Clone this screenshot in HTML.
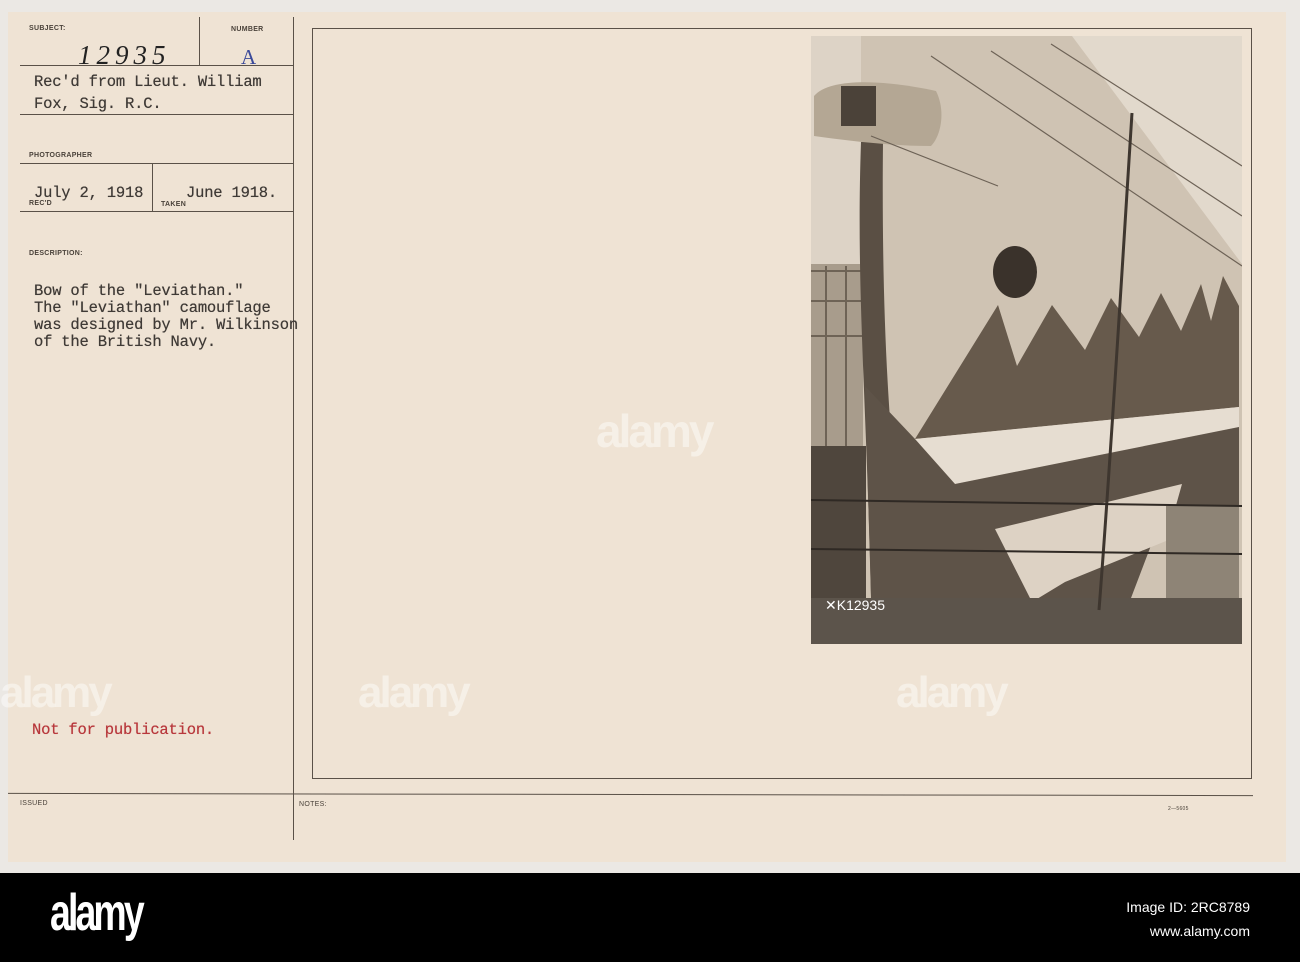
<!DOCTYPE html>
<html><head><style>
body{margin:0;width:1300px;height:962px;background:#ebe8e4;position:relative;overflow:hidden;font-family:"Liberation Mono",monospace;}
.card{position:absolute;left:8px;top:12px;width:1278px;height:850px;background:#efe3d4;}
.l{position:absolute;background:#5a5148;}
.lab{position:absolute;font-family:"Liberation Sans",sans-serif;font-size:7px;font-weight:bold;color:#4a423a;letter-spacing:.3px}
.t{position:absolute;font-size:15.5px;color:#3f3a36;white-space:nowrap;letter-spacing:-.2px;text-shadow:0 0 .4px #3f3a36}
.bar{position:absolute;left:0;top:873px;width:1300px;height:89px;background:#000;}
.wm{position:absolute;color:rgba(255,255,255,.45);font-family:"Liberation Sans",sans-serif;font-weight:bold;}
</style></head><body>
<div class="card"></div>
<div class="l" style="left:20px;top:65px;width:273px;height:1px"></div>
<div class="l" style="left:20px;top:114px;width:273px;height:1px"></div>
<div class="l" style="left:20px;top:163px;width:273px;height:1px"></div>
<div class="l" style="left:20px;top:211px;width:273px;height:1px"></div>
<div class="l" style="left:199px;top:17px;width:1px;height:48px"></div>
<div class="l" style="left:152px;top:163px;width:1px;height:48px"></div>
<div class="l" style="left:293px;top:17px;width:1px;height:823px"></div>
<div class="l" style="left:8px;top:794px;width:1245px;height:1px;transform:rotate(0.1deg)"></div>
<div style="position:absolute;left:312px;top:28px;width:938px;height:749px;border:1px solid #5a5148"></div>
<div class="lab" style="left:29px;top:25px">SUBJECT:</div>
<div class="lab" style="left:231px;top:26px">NUMBER</div>
<div style="position:absolute;left:78px;top:40px;font-family:'Liberation Serif',serif;font-style:italic;font-size:27px;color:#222;letter-spacing:5px">12935</div>
<div style="position:absolute;left:241px;top:45px;font-family:'Liberation Serif',serif;font-size:21px;color:#3b4a9a">A</div>
<div class="t" style="left:34px;top:73px">Rec'd from Lieut. William</div>
<div class="t" style="left:34px;top:95px">Fox, Sig. R.C.</div>
<div class="lab" style="left:29px;top:152px">PHOTOGRAPHER</div>
<div class="t" style="left:34px;top:184px">July 2, 1918</div>
<div class="lab" style="left:29px;top:200px">REC'D</div>
<div class="t" style="left:186px;top:184px">June 1918.</div>
<div class="lab" style="left:161px;top:201px">TAKEN</div>
<div class="lab" style="left:29px;top:250px">DESCRIPTION:</div>
<div class="t" style="left:34px;top:283px;line-height:17px">Bow of the "Leviathan."<br>The "Leviathan" camouflage<br>was designed by Mr. Wilkinson<br>of the British Navy.</div>
<div class="t" style="left:32px;top:721px;color:#b8383c;text-shadow:0 0 .4px #b8383c">Not for publication.</div>
<div class="lab" style="left:20px;top:800px;font-weight:normal">ISSUED</div>
<div class="lab" style="left:299px;top:801px;font-weight:normal">NOTES:</div>
<div class="lab" style="left:1168px;top:806px;font-weight:normal;font-size:5px">2—5605</div>
<svg style="position:absolute;left:811px;top:36px" width="431" height="608" viewBox="0 0 431 608">
<rect width="431" height="608" fill="#cfc3b3"/>
<polygon points="261,0 431,0 431,228" fill="#e2d9cc"/>
<rect x="0" y="0" width="50" height="230" fill="#ddd3c6"/>
<rect x="0" y="228" width="52" height="185" fill="#a89c8c"/>
<path d="M0,235 H52 M0,265 H52 M0,300 H52 M15,230 V410 M35,230 V410" stroke="#6e6356" stroke-width="2"/>
<rect x="0" y="410" width="55" height="155" fill="#4f463d"/>
<path d="M50,106 C45,250 55,350 60,560 L100,560 C80,450 70,300 72,106Z" fill="#5a4f44"/>
<polygon points="104,403 187,269 206,330 241,269 274,314 300,262 328,301 350,257 370,295 390,248 400,285 412,240 428,270 428,371" fill="#675a4c"/>
<polygon points="104,403 428,371 428,391 144,448" fill="#e6ddd1"/>
<polygon points="54,350 104,403 144,448 428,391 428,470 355,470 320,562 60,562" fill="#5e5348"/>
<polygon points="184,493 371,448 355,505 254,546 221,566" fill="#ddd2c4"/>
<rect x="355" y="470" width="73" height="92" fill="#8e8476"/>
<rect x="0" y="562" width="431" height="46" fill="#5c544b"/>
<path d="M3,60 C20,40 80,45 125,55 C135,75 130,100 120,110 C80,110 40,105 3,100Z" fill="#b4a794"/>
<rect x="30" y="50" width="35" height="40" fill="#4b4239"/>
<path d="M120,20 L431,230 M180,15 L431,180 M240,8 L431,130 M60,100 L187,150" stroke="#6d6256" stroke-width="1.2" fill="none"/>
<ellipse cx="204" cy="236" rx="22" ry="26" fill="#3a322b"/>
<path d="M321,77 C310,250 300,420 288,574" stroke="#3e362f" stroke-width="3" fill="none"/>
<path d="M0,464 L431,470 M0,513 L431,518" stroke="#2f2924" stroke-width="2"/>
<text x="14" y="574" fill="#fff" font-family="Liberation Sans" font-size="14">✕K12935</text>
</svg>
<div class="wm" style="left:596px;top:404px;font-size:46px;letter-spacing:-3px">alamy</div>
<div class="wm" style="left:0px;top:668px;font-size:44px;letter-spacing:-3px">alamy</div>
<div class="wm" style="left:358px;top:668px;font-size:44px;letter-spacing:-3px">alamy</div>
<div class="wm" style="left:896px;top:668px;font-size:44px;letter-spacing:-3px">alamy</div>
<div class="bar">
<div style="position:absolute;left:50px;top:10px;color:#fff;font-family:'Liberation Sans',sans-serif;font-weight:bold;font-size:52px;letter-spacing:-4px;transform:scaleX(.72);transform-origin:left">alamy</div>
<div style="position:absolute;right:50px;top:22px;color:#fff;font-family:'Liberation Sans',sans-serif;font-size:14px;text-align:right;line-height:24px">Image ID: 2RC8789<br>www.alamy.com</div>
</div>
</body></html>
